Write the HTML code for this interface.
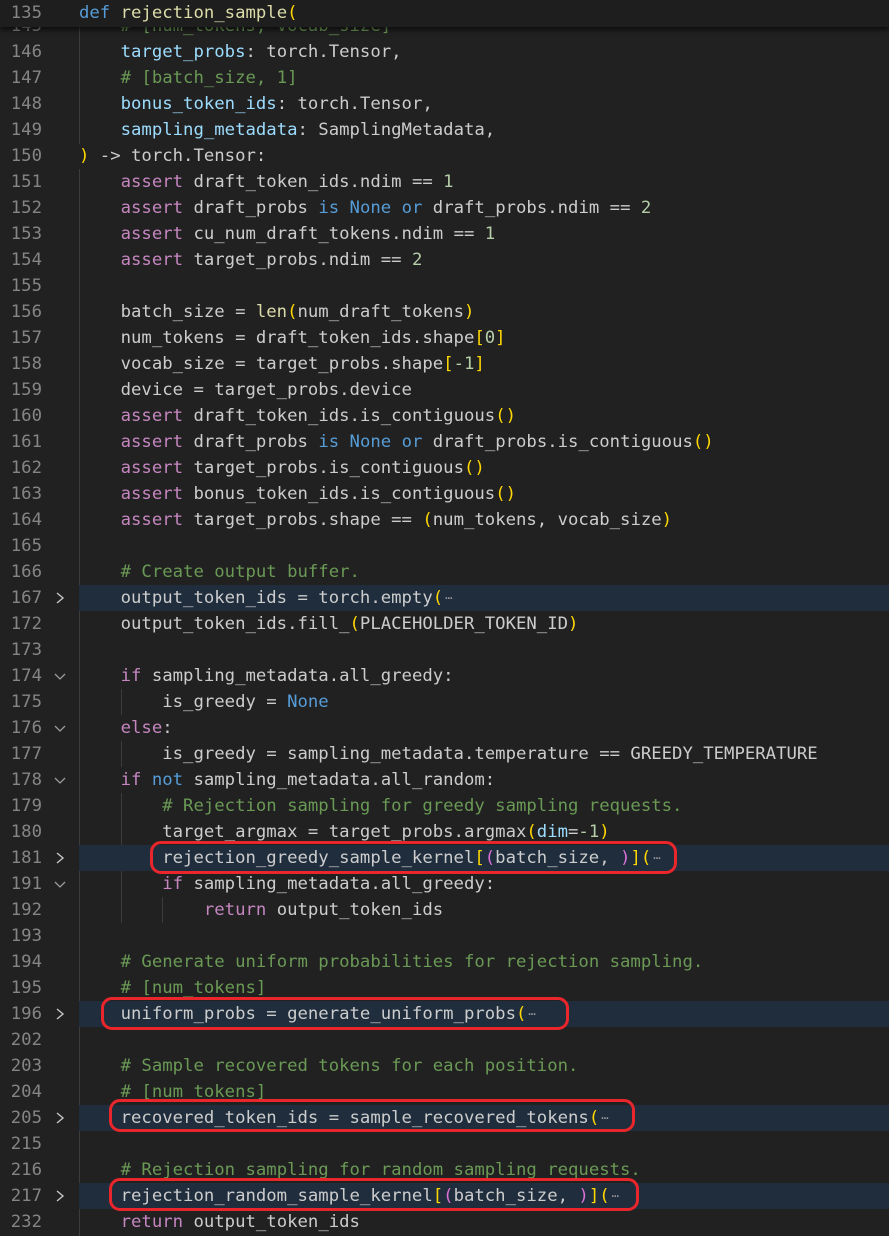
<!DOCTYPE html>
<html><head><meta charset="utf-8"><style>
body{margin:0;width:889px;height:1236px;background:#212121;overflow:hidden;position:relative;font-family:"DejaVu Sans Mono","Liberation Mono",monospace;font-size:17.3px;color:#cccccc}
.r{position:absolute;left:0;width:889px;height:26px;line-height:26px}
.n{position:absolute;left:0;width:42px;text-align:right;color:#858585}
.ch{position:absolute;left:53px;top:0;width:14px;height:26px}
.c{position:absolute;left:79px;white-space:pre}
.hl{background:#1f2d3d}
.hl .c{}
.k{color:#c586c0}.b{color:#569cd6}.f{color:#dcdcaa}.p{color:#9cdcfe}.cm{color:#6a9955}.nu{color:#b5cea8}.y{color:#ffd700}.m{color:#da70d6}
.g{position:absolute;width:1px;background:#3c3c3c}
.box{position:absolute;border:3px solid #e8262b;border-radius:11px;box-sizing:border-box}
.el{display:inline-block;color:#9a9a9a;font-size:12px;line-height:14px;vertical-align:middle;margin-left:2px}
.hdr{position:absolute;left:0;top:0;width:889px;height:27px;background:#1e1e1e;box-shadow:0 3px 5px rgba(0,0,0,.6);z-index:5;line-height:27px}
</style></head><body>
<div class="g" style="left:79px;top:27px;height:117px"></div>
<div class="g" style="left:79px;top:169px;height:1067px"></div>
<div class="g" style="left:121px;top:689px;height:26px"></div>
<div class="g" style="left:121px;top:741px;height:26px"></div>
<div class="g" style="left:121px;top:793px;height:130px"></div>
<div class="g" style="left:162px;top:897px;height:26px"></div>

<div class="hdr"><span class="n" style="line-height:27px">135</span><span class="c"><span class="b">def</span> <span class="f">rejection_sample</span><span class="y">(</span></span></div>

<div class="r" style="top:13px"><span class="n">145</span><span class="c">    <span class="cm"># [num_tokens, vocab_size]</span></span></div>

<div id="rows"></div>
<div class="r" style="top:39px"><span class="n">146</span><span class="c">    <span class="p">target_probs</span>: torch.Tensor,</span></div>
<div class="r" style="top:65px"><span class="n">147</span><span class="c">    <span class="cm"># [batch_size, 1]</span></span></div>
<div class="r" style="top:91px"><span class="n">148</span><span class="c">    <span class="p">bonus_token_ids</span>: torch.Tensor,</span></div>
<div class="r" style="top:117px"><span class="n">149</span><span class="c">    <span class="p">sampling_metadata</span>: SamplingMetadata,</span></div>
<div class="r" style="top:143px"><span class="n">150</span><span class="c"><span class="y">)</span> -&gt; torch.Tensor:</span></div>
<div class="r" style="top:169px"><span class="n">151</span><span class="c">    <span class="k">assert</span> draft_token_ids.ndim == <span class="nu">1</span></span></div>
<div class="r" style="top:195px"><span class="n">152</span><span class="c">    <span class="k">assert</span> draft_probs <span class="b">is</span> <span class="b">None</span> <span class="b">or</span> draft_probs.ndim == <span class="nu">2</span></span></div>
<div class="r" style="top:221px"><span class="n">153</span><span class="c">    <span class="k">assert</span> cu_num_draft_tokens.ndim == <span class="nu">1</span></span></div>
<div class="r" style="top:247px"><span class="n">154</span><span class="c">    <span class="k">assert</span> target_probs.ndim == <span class="nu">2</span></span></div>
<div class="r" style="top:273px"><span class="n">155</span></div>
<div class="r" style="top:299px"><span class="n">156</span><span class="c">    batch_size = <span class="f">len</span><span class="y">(</span>num_draft_tokens<span class="y">)</span></span></div>
<div class="r" style="top:325px"><span class="n">157</span><span class="c">    num_tokens = draft_token_ids.shape<span class="y">[</span><span class="nu">0</span><span class="y">]</span></span></div>
<div class="r" style="top:351px"><span class="n">158</span><span class="c">    vocab_size = target_probs.shape<span class="y">[</span><span class="nu">-1</span><span class="y">]</span></span></div>
<div class="r" style="top:377px"><span class="n">159</span><span class="c">    device = target_probs.device</span></div>
<div class="r" style="top:403px"><span class="n">160</span><span class="c">    <span class="k">assert</span> draft_token_ids.is_contiguous<span class="y">()</span></span></div>
<div class="r" style="top:429px"><span class="n">161</span><span class="c">    <span class="k">assert</span> draft_probs <span class="b">is</span> <span class="b">None</span> <span class="b">or</span> draft_probs.is_contiguous<span class="y">()</span></span></div>
<div class="r" style="top:455px"><span class="n">162</span><span class="c">    <span class="k">assert</span> target_probs.is_contiguous<span class="y">()</span></span></div>
<div class="r" style="top:481px"><span class="n">163</span><span class="c">    <span class="k">assert</span> bonus_token_ids.is_contiguous<span class="y">()</span></span></div>
<div class="r" style="top:507px"><span class="n">164</span><span class="c">    <span class="k">assert</span> target_probs.shape == <span class="y">(</span>num_tokens, vocab_size<span class="y">)</span></span></div>
<div class="r" style="top:533px"><span class="n">165</span></div>
<div class="r" style="top:559px"><span class="n">166</span><span class="c">    <span class="cm"># Create output buffer.</span></span></div>
<div class="r" style="top:585px"><div class="hl" style="position:absolute;left:79px;right:0;top:0;bottom:0"></div><span class="n">167</span><svg class="ch" viewBox="0 0 14 26"><path d="M4 8l6 5-6 5" fill="none" stroke="#c5c5c5" stroke-width="1.4"/></svg><span class="c">    output_token_ids = torch.empty<span class="y">(</span><span class="el">⋯</span></span></div>
<div class="r" style="top:611px"><span class="n">172</span><span class="c">    output_token_ids.fill_<span class="y">(</span>PLACEHOLDER_TOKEN_ID<span class="y">)</span></span></div>
<div class="r" style="top:637px"><span class="n">173</span></div>
<div class="r" style="top:663px"><span class="n">174</span><svg class="ch" viewBox="0 0 14 26"><path d="M2 11l5 5 5-5" fill="none" stroke="#9a9a9a" stroke-width="1.3"/></svg><span class="c">    <span class="k">if</span> sampling_metadata.all_greedy:</span></div>
<div class="r" style="top:689px"><span class="n">175</span><span class="c">        is_greedy = <span class="b">None</span></span></div>
<div class="r" style="top:715px"><span class="n">176</span><svg class="ch" viewBox="0 0 14 26"><path d="M2 11l5 5 5-5" fill="none" stroke="#9a9a9a" stroke-width="1.3"/></svg><span class="c">    <span class="k">else</span>:</span></div>
<div class="r" style="top:741px"><span class="n">177</span><span class="c">        is_greedy = sampling_metadata.temperature == GREEDY_TEMPERATURE</span></div>
<div class="r" style="top:767px"><span class="n">178</span><svg class="ch" viewBox="0 0 14 26"><path d="M2 11l5 5 5-5" fill="none" stroke="#9a9a9a" stroke-width="1.3"/></svg><span class="c">    <span class="k">if</span> <span class="b">not</span> sampling_metadata.all_random:</span></div>
<div class="r" style="top:793px"><span class="n">179</span><span class="c">        <span class="cm"># Rejection sampling for greedy sampling requests.</span></span></div>
<div class="r" style="top:819px"><span class="n">180</span><span class="c">        target_argmax = target_probs.argmax<span class="y">(</span><span class="p">dim</span>=<span class="nu">-1</span><span class="y">)</span></span></div>
<div class="r" style="top:845px"><div class="hl" style="position:absolute;left:79px;right:0;top:0;bottom:0"></div><span class="n">181</span><svg class="ch" viewBox="0 0 14 26"><path d="M4 8l6 5-6 5" fill="none" stroke="#c5c5c5" stroke-width="1.4"/></svg><span class="c">        rejection_greedy_sample_kernel<span class="y">[</span><span class="m">(</span>batch_size, <span class="m">)</span><span class="y">](</span><span class="el">⋯</span></span></div>
<div class="r" style="top:871px"><span class="n">191</span><svg class="ch" viewBox="0 0 14 26"><path d="M2 11l5 5 5-5" fill="none" stroke="#9a9a9a" stroke-width="1.3"/></svg><span class="c">        <span class="k">if</span> sampling_metadata.all_greedy:</span></div>
<div class="r" style="top:897px"><span class="n">192</span><span class="c">            <span class="k">return</span> output_token_ids</span></div>
<div class="r" style="top:923px"><span class="n">193</span></div>
<div class="r" style="top:949px"><span class="n">194</span><span class="c">    <span class="cm"># Generate uniform probabilities for rejection sampling.</span></span></div>
<div class="r" style="top:975px"><span class="n">195</span><span class="c">    <span class="cm"># [num_tokens]</span></span></div>
<div class="r" style="top:1001px"><div class="hl" style="position:absolute;left:79px;right:0;top:0;bottom:0"></div><span class="n">196</span><svg class="ch" viewBox="0 0 14 26"><path d="M4 8l6 5-6 5" fill="none" stroke="#c5c5c5" stroke-width="1.4"/></svg><span class="c">    uniform_probs = generate_uniform_probs<span class="y">(</span><span class="el">⋯</span></span></div>
<div class="r" style="top:1027px"><span class="n">202</span></div>
<div class="r" style="top:1053px"><span class="n">203</span><span class="c">    <span class="cm"># Sample recovered tokens for each position.</span></span></div>
<div class="r" style="top:1079px"><span class="n">204</span><span class="c">    <span class="cm"># [num_tokens]</span></span></div>
<div class="r" style="top:1105px"><div class="hl" style="position:absolute;left:79px;right:0;top:0;bottom:0"></div><span class="n">205</span><svg class="ch" viewBox="0 0 14 26"><path d="M4 8l6 5-6 5" fill="none" stroke="#c5c5c5" stroke-width="1.4"/></svg><span class="c">    recovered_token_ids = sample_recovered_tokens<span class="y">(</span><span class="el">⋯</span></span></div>
<div class="r" style="top:1131px"><span class="n">215</span></div>
<div class="r" style="top:1157px"><span class="n">216</span><span class="c">    <span class="cm"># Rejection sampling for random sampling requests.</span></span></div>
<div class="r" style="top:1183px"><div class="hl" style="position:absolute;left:79px;right:0;top:0;bottom:0"></div><span class="n">217</span><svg class="ch" viewBox="0 0 14 26"><path d="M4 8l6 5-6 5" fill="none" stroke="#c5c5c5" stroke-width="1.4"/></svg><span class="c">    rejection_random_sample_kernel<span class="y">[</span><span class="m">(</span>batch_size, <span class="m">)</span><span class="y">](</span><span class="el">⋯</span></span></div>
<div class="r" style="top:1209px"><span class="n">232</span><span class="c">    <span class="k">return</span> output_token_ids</span></div>

<div class="box" style="left:150px;top:841px;width:527px;height:33px"></div>
<div class="box" style="left:101px;top:997px;width:468px;height:33px"></div>
<div class="box" style="left:109px;top:1099px;width:526px;height:33px"></div>
<div class="box" style="left:109px;top:1178px;width:530px;height:33px"></div>
</body></html>
